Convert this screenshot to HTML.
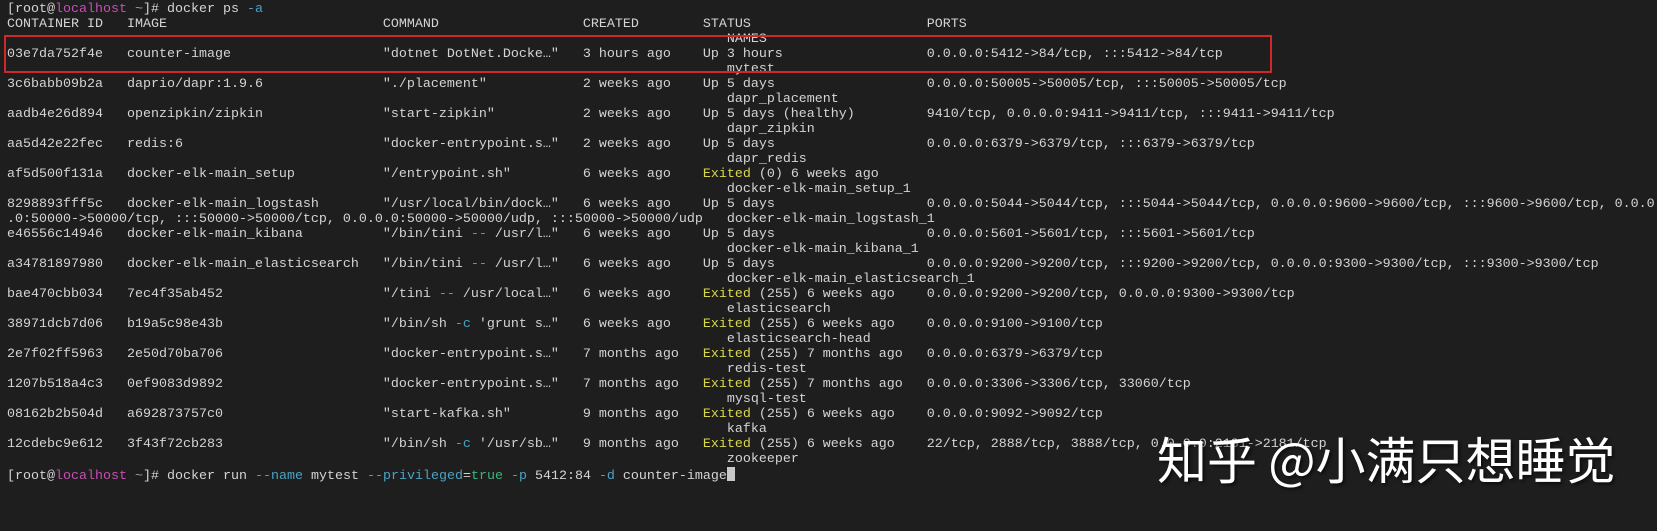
<!DOCTYPE html>
<html><head><meta charset="utf-8"><style>
html,body{margin:0;padding:0;width:1657px;height:531px;overflow:hidden;background:#1e1e1e;}
#t{position:absolute;left:7px;top:2px;font-family:"Liberation Mono",monospace;font-size:13.33px;line-height:15px;color:#d4d4d4;white-space:normal;}
#t div{height:15px;white-space:pre;}
span.a,span.b,span.c,span.d,span.e{display:inline-block;}
.a{width:15ch}.b{width:32ch}.c{width:25ch}.d{width:15ch}.e{width:28ch}
.n{padding-left:90ch}
.m{color:#c64fb3}.g{color:#9aa0a6}.cy{color:#4aa3c4}.gr{color:#3fb37f}.y{color:#d9d84a}
.cur{display:inline-block;width:8px;height:14px;background:#c8c8c8;vertical-align:-2px}
#box{position:absolute;left:4px;top:35px;width:1268px;height:38px;border:2.5px solid #d02828;box-sizing:border-box;}
#wm{position:absolute;left:1157px;top:430px;font-family:"Noto Sans CJK SC","WenQuanYi Zen Hei",sans-serif;font-size:50px;line-height:56px;color:#fff;white-space:nowrap;text-shadow:2px 2px 3px rgba(0,0,0,.6);}
</style></head><body>
<div id="t"><div>[root@<span class="m">localhost</span> <span class="g">~</span>]# docker ps <span class="cy">-a</span></div><div><span class="a">CONTAINER ID</span><span class="b">IMAGE</span><span class="c">COMMAND</span><span class="d">CREATED</span><span class="e">STATUS</span>PORTS</div><div class="n">NAMES</div><div><span class="a">03e7da752f4e</span><span class="b">counter-image</span><span class="c">"dotnet DotNet.Docke…"</span><span class="d">3 hours ago</span><span class="e">Up 3 hours</span>0.0.0.0:5412->84/tcp, :::5412->84/tcp</div><div class="n">mytest</div><div><span class="a">3c6babb09b2a</span><span class="b">daprio/dapr:1.9.6</span><span class="c">"./placement"</span><span class="d">2 weeks ago</span><span class="e">Up 5 days</span>0.0.0.0:50005->50005/tcp, :::50005->50005/tcp</div><div class="n">dapr_placement</div><div><span class="a">aadb4e26d894</span><span class="b">openzipkin/zipkin</span><span class="c">"start-zipkin"</span><span class="d">2 weeks ago</span><span class="e">Up 5 days (healthy)</span>9410/tcp, 0.0.0.0:9411->9411/tcp, :::9411->9411/tcp</div><div class="n">dapr_zipkin</div><div><span class="a">aa5d42e22fec</span><span class="b">redis:6</span><span class="c">"docker-entrypoint.s…"</span><span class="d">2 weeks ago</span><span class="e">Up 5 days</span>0.0.0.0:6379->6379/tcp, :::6379->6379/tcp</div><div class="n">dapr_redis</div><div><span class="a">af5d500f131a</span><span class="b">docker-elk-main_setup</span><span class="c">"/entrypoint.sh"</span><span class="d">6 weeks ago</span><span class="e"><span class="y">Exited</span> (0) 6 weeks ago</span></div><div class="n">docker-elk-main_setup_1</div><div><span class="a">8298893fff5c</span><span class="b">docker-elk-main_logstash</span><span class="c">"/usr/local/bin/dock…"</span><span class="d">6 weeks ago</span><span class="e">Up 5 days</span>0.0.0.0:5044->5044/tcp, :::5044->5044/tcp, 0.0.0.0:9600->9600/tcp, :::9600->9600/tcp, 0.0.0</div><div>.0:50000->50000/tcp, :::50000->50000/tcp, 0.0.0.0:50000->50000/udp, :::50000->50000/udp   docker-elk-main_logstash_1</div><div><span class="a">e46556c14946</span><span class="b">docker-elk-main_kibana</span><span class="c">"/bin/tini <span class="cy">--</span> /usr/l…"</span><span class="d">6 weeks ago</span><span class="e">Up 5 days</span>0.0.0.0:5601->5601/tcp, :::5601->5601/tcp</div><div class="n">docker-elk-main_kibana_1</div><div><span class="a">a34781897980</span><span class="b">docker-elk-main_elasticsearch</span><span class="c">"/bin/tini <span class="cy">--</span> /usr/l…"</span><span class="d">6 weeks ago</span><span class="e">Up 5 days</span>0.0.0.0:9200->9200/tcp, :::9200->9200/tcp, 0.0.0.0:9300->9300/tcp, :::9300->9300/tcp</div><div class="n">docker-elk-main_elasticsearch_1</div><div><span class="a">bae470cbb034</span><span class="b">7ec4f35ab452</span><span class="c">"/tini <span class="cy">--</span> /usr/local…"</span><span class="d">6 weeks ago</span><span class="e"><span class="y">Exited</span> (255) 6 weeks ago</span>0.0.0.0:9200->9200/tcp, 0.0.0.0:9300->9300/tcp</div><div class="n">elasticsearch</div><div><span class="a">38971dcb7d06</span><span class="b">b19a5c98e43b</span><span class="c">"/bin/sh <span class="cy">-c</span> 'grunt s…"</span><span class="d">6 weeks ago</span><span class="e"><span class="y">Exited</span> (255) 6 weeks ago</span>0.0.0.0:9100->9100/tcp</div><div class="n">elasticsearch-head</div><div><span class="a">2e7f02ff5963</span><span class="b">2e50d70ba706</span><span class="c">"docker-entrypoint.s…"</span><span class="d">7 months ago</span><span class="e"><span class="y">Exited</span> (255) 7 months ago</span>0.0.0.0:6379->6379/tcp</div><div class="n">redis-test</div><div><span class="a">1207b518a4c3</span><span class="b">0ef9083d9892</span><span class="c">"docker-entrypoint.s…"</span><span class="d">7 months ago</span><span class="e"><span class="y">Exited</span> (255) 7 months ago</span>0.0.0.0:3306->3306/tcp, 33060/tcp</div><div class="n">mysql-test</div><div><span class="a">08162b2b504d</span><span class="b">a692873757c0</span><span class="c">"start-kafka.sh"</span><span class="d">9 months ago</span><span class="e"><span class="y">Exited</span> (255) 6 weeks ago</span>0.0.0.0:9092->9092/tcp</div><div class="n">kafka</div><div><span class="a">12cdebc9e612</span><span class="b">3f43f72cb283</span><span class="c">"/bin/sh <span class="cy">-c</span> '/usr/sb…"</span><span class="d">9 months ago</span><span class="e"><span class="y">Exited</span> (255) 6 weeks ago</span>22/tcp, 2888/tcp, 3888/tcp, 0.0.0.0:2181->2181/tcp</div><div class="n">zookeeper</div><div>[root@<span class="m">localhost</span> <span class="g">~</span>]# docker run <span class="cy">--name</span> mytest <span class="cy">--privileged</span>=<span class="gr">true</span> <span class="cy">-p</span> 5412:84 <span class="cy">-d</span> counter-image<span class="cur"></span></div></div>
<div id="box"></div>
<div id="wm">知乎 @小满只想睡觉</div>
</body></html>
